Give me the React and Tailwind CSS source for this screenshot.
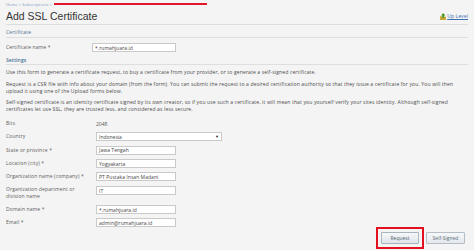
import React from "react";

function Field({ value, w = "w-[80px]" }) {
  return (
    <div className={`${w} h-[9px] bg-white border border-[#c9c9c9] flex items-center px-[2px] text-[5px] tracking-[0.05px] leading-[6px] text-[#444] whitespace-nowrap overflow-hidden`}>
      {value}
    </div>
  );
}

function Row({ label, children, h = "h-[13px]", labelW = "w-[90px]", start = false }) {
  return (
    <div className={`flex ${start ? "items-start pt-[3px]" : "items-center"} ${h}`}>
      <div className={`${labelW} shrink-0 text-[5px] tracking-[0.12px] leading-[6.5px] text-[#5c5c5c]`}>{label}</div>
      {children}
    </div>
  );
}

function UpIcon() {
  return (
    <svg width="6" height="7" viewBox="0 0 6 7" className="mr-[1.5px]">
      <path d="M0 3.2 H2 L2.6 3.8 H6 V7 H0 Z" fill="#c9a838" />
      <path d="M3.2 0 L5.4 2.4 H4.2 V5 H2.2 V2.4 H1 Z" fill="#4f9a2c" />
    </svg>
  );
}

export default function App() {
  return (
    <div className="w-[474px] h-[250px] overflow-hidden bg-[#f4f4f4] font-['Open_Sans',sans-serif] text-[#555]">
      <div className="px-[6px]">
        {/* breadcrumb */}
        <div className="h-[8px] pt-[2px] flex items-start">
          <span className="text-[4px] leading-[5px] tracking-[0.1px] text-[#7d9bc1] whitespace-nowrap">Home » Subscriptions »</span>
          <span className="ml-[2px] mt-[1px] h-[2px] w-[153px] bg-[#e3162b]" />
        </div>
        {/* title row */}
        <div className="h-[17px] flex justify-between border-b border-[#dddddd]">
          <div className="self-end pb-[2px] font-['Liberation_Sans',Arial,sans-serif] text-[10.5px] leading-[12px] text-[#333]">
            Add SSL Certificate
          </div>
          <div className="self-center flex items-center">
            <UpIcon />
            <span className="text-[5px] leading-[6px] tracking-[0.1px] text-[#3d6fb0] underline">Up Level</span>
          </div>
        </div>
        {/* Certificate section */}
        <div className="h-[13px] flex items-end pb-[2px] border-b border-[#dedede]">
          <span className="text-[5px] tracking-[0.12px] leading-[6px] text-[#4b6f90]">Certificate</span>
        </div>
        <div className="mt-[3px]">
          <Row label="Certificate name *" labelW="w-[86px]">
            <Field value="*.rumahjuara.id" w="w-[84px]" />
          </Row>
        </div>
        {/* Settings section */}
        <div className="h-[11px] flex items-end pb-[1px] border-b border-[#dedede]">
          <span className="text-[5px] tracking-[0.12px] leading-[6px] font-semibold text-[#3f6f96]">Settings</span>
        </div>
        <div className="text-[5px] tracking-[0.15px] leading-[7px] text-[#4a4a4a] w-[458px]">
          <p className="mt-[4px]">
            Use this form to generate a certificate request, to buy a certificate from your provider, or to generate a self-signed certificate.
          </p>
          <p className="mt-[5px]">
            Request is a CSR file with info about your domain (from the form). You can submit the request to a desired certification authority so that they issue a certificate for you. You will then upload it using one of the Upload forms below.
          </p>
          <p className="mt-[4px]">
            Self-signed certificate is an identity certificate signed by its own creator, so if you use such a certificate, it will mean that you yourself verify your sites identity. Although self-signed certificates let use SSL, they are trusted less, and considered as less secure.
          </p>
        </div>
        <div className="mt-[4px]">
          <Row label="Bits">
            <span className="text-[5px] leading-[6px] text-[#555]">2048</span>
          </Row>
          <Row label="Country">
            <div className="w-[126px] h-[9px] bg-white border border-[#c9c9c9] flex items-center justify-between px-[2px] text-[5px] leading-[6px] text-[#444]">
              <span>Indonesia</span>
              <span className="text-[4px] leading-[4px] text-[#222]">▼</span>
            </div>
          </Row>
          <Row label="State or province *" h="h-[14px]">
            <Field value="Jawa Tengah" />
          </Row>
          <Row label="Location (city) *">
            <Field value="Yogyakarta" />
          </Row>
          <Row label="Organization name (company) *">
            <Field value="PT Pustaka Insan Madani" />
          </Row>
          <Row label={<>Organization department or<br />division name</>} h="h-[19px]" start>
            <Field value="IT" />
          </Row>
          <Row label="Domain name *" h="h-[15px]">
            <Field value="*.rumahjuara.id" />
          </Row>
          <Row label="Email *" h="h-[11px]">
            <Field value="admin@rumahjuara.id" />
          </Row>
        </div>
        <div className="-mt-[1px] flex justify-end items-center gap-[2px] pr-[3px]">
          <div className="border-2 border-[#e3101f] p-[3px]">
            <div className="w-[38px] h-[12px] rounded-[1px] border border-[#a9b3bc] bg-gradient-to-b from-[#f6f8fa] to-[#dfe5ea] flex items-center justify-center text-[5px] leading-[5px] text-[#4d5d6d]">
              Request
            </div>
          </div>
          <div className="w-[39px] h-[12px] rounded-[1px] border border-[#b5bec6] bg-gradient-to-b from-[#f6f8fa] to-[#e3e8ec] flex items-center justify-center text-[5px] leading-[5px] text-[#5d6b78]">
            Self-Signed
          </div>
        </div>
      </div>
    </div>
  );
}
